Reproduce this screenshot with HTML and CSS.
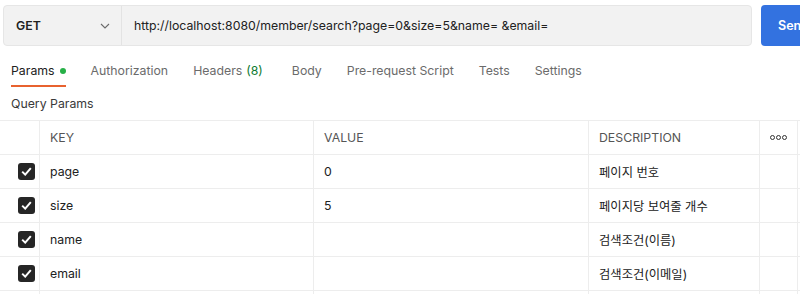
FILE: index.html
```html
<!DOCTYPE html>
<html lang="en">
<head>
    <meta charset="UTF-8">
    <title>Request Params</title>
    <link rel="stylesheet" href="styles.css">
</head>
<body>
    <div class="request-bar">
        <div class="url-group">
            <div class="method">
                <span>GET</span>
                <svg class="chevron" width="10" height="6" viewBox="0 0 10 6"><path d="M1 1l4 4 4-4" fill="none" stroke="#6b6b6b" stroke-width="1.1"/></svg>
            </div>
            <div class="url">http://localhost:8080/member/search?page=0&amp;size=5&amp;name= &amp;email=</div>
        </div>
        <button class="send">Send</button>
    </div>

    <div class="tabs">
        <div class="tab active">Params <span class="dot"></span></div>
        <div class="tab">Authorization</div>
        <div class="tab">Headers <span class="count">(8)</span></div>
        <div class="tab tab-body">Body</div>
        <div class="tab">Pre-request Script</div>
        <div class="tab">Tests</div>
        <div class="tab">Settings</div>
    </div>

    <div class="section-title">Query Params</div>

    <div class="params">
        <div class="row head">
            <div class="cell check"></div>
            <div class="cell key">KEY</div>
            <div class="cell value">VALUE</div>
            <div class="cell desc">DESCRIPTION</div>
            <div class="cell more"><span class="dots"><i></i><i></i><i></i></span></div>
        </div>
        <div class="row">
            <div class="cell check"><span class="box"><svg width="11" height="9" viewBox="0 0 11 9"><path d="M1.2 4.6l3 3 5.6-6.4" fill="none" stroke="#fff" stroke-width="2"/></svg></span></div>
            <div class="cell key">page</div>
            <div class="cell value">0</div>
            <div class="cell desc">페이지 번호</div>
            <div class="cell more"></div>
        </div>
        <div class="row">
            <div class="cell check"><span class="box"><svg width="11" height="9" viewBox="0 0 11 9"><path d="M1.2 4.6l3 3 5.6-6.4" fill="none" stroke="#fff" stroke-width="2"/></svg></span></div>
            <div class="cell key">size</div>
            <div class="cell value">5</div>
            <div class="cell desc">페이지당 보여줄 개수</div>
            <div class="cell more"></div>
        </div>
        <div class="row">
            <div class="cell check"><span class="box"><svg width="11" height="9" viewBox="0 0 11 9"><path d="M1.2 4.6l3 3 5.6-6.4" fill="none" stroke="#fff" stroke-width="2"/></svg></span></div>
            <div class="cell key">name</div>
            <div class="cell value"></div>
            <div class="cell desc">검색조건(이름)</div>
            <div class="cell more"></div>
        </div>
        <div class="row">
            <div class="cell check"><span class="box"><svg width="11" height="9" viewBox="0 0 11 9"><path d="M1.2 4.6l3 3 5.6-6.4" fill="none" stroke="#fff" stroke-width="2"/></svg></span></div>
            <div class="cell key">email</div>
            <div class="cell value"></div>
            <div class="cell desc">검색조건(이메일)</div>
            <div class="cell more"></div>
        </div>
        <div class="row">
            <div class="cell check"></div>
            <div class="cell key"></div>
            <div class="cell value"></div>
            <div class="cell desc"></div>
            <div class="cell more"></div>
        </div>
    </div>
</body>
</html>
```

FILE: styles.css
```css
body {
    margin: 0;
    width: 800px;
    height: 294px;
    overflow: hidden;
    background: #fff;
    font-family: Inter, "Noto Sans CJK KR", sans-serif;
    font-size: 12.3px;
    color: #212121;
}
.request-bar {
    display: flex;
    gap: 9px;
    padding: 5px 0 0 3px;
    overflow: hidden;
}
.url-group {
    display: flex;
    flex: none;
    width: 747px;
    height: 39px;
    background: #f2f2f2;
    border: 1px solid #e6e6e6;
    border-radius: 4px;
}
.method {
    display: flex;
    align-items: center;
    justify-content: space-between;
    width: 94px;
    padding: 0 11px 0 12px;
    border-right: 1px solid #e3e3e3;
    font-weight: 600;
    color: #212121;
}
.url {
    display: flex;
    align-items: center;
    padding-left: 12px;
    color: #212121;
}
.send {
    flex: none;
    width: 90px;
    height: 41px;
    border: none;
    border-radius: 4px;
    background: #3372e0;
    color: #fff;
    font-family: Inter, sans-serif;
    font-weight: 600;
    font-size: 12.5px;
    text-align: left;
    padding-left: 17px;
}
.tabs {
    display: flex;
    padding: 9px 0 0 11px;
}
.tab {
    display: flex;
    align-items: center;
    padding: 8px 0 6px;
    margin-right: 25px;
    line-height: 16px;
    color: #6b6b6b;
    border-bottom: 2px solid transparent;
}
.tab.active {
    color: #212121;
    border-color: #e8622f;
}
.tab-body {
    margin-left: 4px;
}
.dot {
    width: 6px;
    height: 6px;
    margin-left: 5px;
    border-radius: 50%;
    background: #26b047;
}
.count {
    margin-left: 4px;
    color: #0f7b33;
}
.section-title {
    padding: 9px 11px 0;
    line-height: 16px;
    height: 24px;
    color: #3a3a3a;
}
.params {
    border-top: 1px solid #ededed;
}
.row {
    display: flex;
    height: 33px;
    border-bottom: 1px solid #ededed;
}
.cell {
    display: flex;
    align-items: center;
    padding-left: 10px;
    border-right: 1px solid #ededed;
}
.head .cell {
    color: #555;
}
.check {
    width: 35px;
    padding-left: 0;
    padding-right: 4px;
    justify-content: flex-end;
}
.key {
    width: 263px;
}
.value {
    width: 264px;
}
.desc {
    width: 160px;
}
.more {
    width: 37px;
    padding-left: 0;
    justify-content: center;
}
.box {
    display: flex;
    align-items: center;
    justify-content: center;
    width: 17px;
    height: 17px;
    border-radius: 3px;
    background: #262626;
}
.dots {
    display: flex;
    gap: 1px;
}
.dots i {
    width: 3px;
    height: 3px;
    border: 1px solid #333;
    border-radius: 50%;
}
```
